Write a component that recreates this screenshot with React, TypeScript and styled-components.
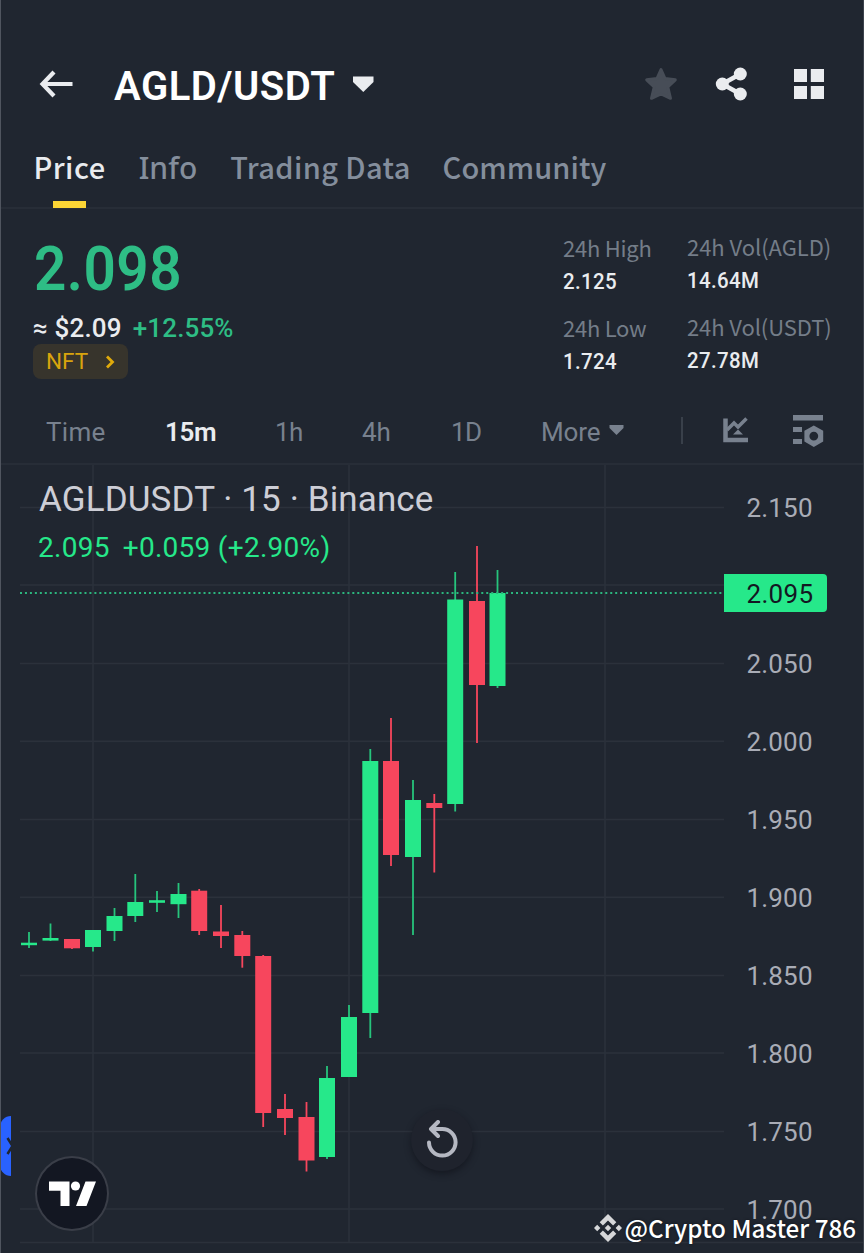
import React from 'react';
import styled, { createGlobalStyle } from 'styled-components';

const roboto = "Roboto, 'Liberation Sans', sans-serif";
const plex = "'Noto Sans CJK SC', 'Noto Sans', sans-serif";

const GlobalStyle = createGlobalStyle`
  * { box-sizing: border-box; }
  body { margin: 0; background: #202630; }
`;

const Screen = styled.main`
  position: relative;
  display: flex;
  flex-direction: column;
  width: 864px;
  height: 1253px;
  overflow: hidden;
  background: #202630;
  border-left: 1px solid #50555f;
  border-right: 1px solid #3c424c;
  font-family: ${roboto};
`;

const Header = styled.header`
  display: flex;
  align-items: center;
  height: 142px;
  padding: 26px 37px 0 37px;
`;

const PairTitle = styled.h1`
  display: flex;
  align-items: center;
  width: 261px;
  margin: 5px 0 0 40px;
  color: #fff;
  font: 600 40px/48px ${roboto};
  letter-spacing: 0.5px;
  white-space: nowrap;
`;

const HeaderActions = styled.div`
  display: flex;
  align-items: center;
  gap: 37px;
  margin-left: auto;
`;

const Icon = styled.svg`
  display: block;
  flex: none;
`;

const TitleCaret = styled(Icon)`
  margin: -5px 0 0 auto;
`;

const TabBar = styled.nav`
  display: flex;
  gap: 33px;
  height: 67px;
  padding-left: 33px;
  border-bottom: 2px solid #272d37;
`;

const Tab = styled.div<{ $active?: boolean; $width: number; $spacing: number; $serifed?: boolean }>`
  display: flex;
  flex-direction: column;
  align-items: center;
  justify-content: space-between;
  width: ${p => p.$width}px;
  color: ${p => (p.$active ? '#eaecef' : '#848e9c')};
  font: 500 ${p => (p.$serifed ? 30 : 29)}px/${p => (p.$serifed ? 51 : 49)}px ${p => (p.$serifed ? "'Noto Sans', sans-serif" : plex)};
  letter-spacing: ${p => p.$spacing}px;
  white-space: nowrap;
`;

const TabMarker = styled.span`
  width: 33px;
  height: 7px;
  margin-bottom: -1px;
  background: #fcd535;
`;

const Summary = styled.section`
  display: flex;
  justify-content: space-between;
  height: 192px;
  padding: 27px 32px 0 32px;
`;

const PriceBlock = styled.div`
  display: flex;
  flex-direction: column;
  align-items: flex-start;
`;

const LastPrice = styled.div`
  height: 66px;
  margin-left: 1px;
  color: #2ebd85;
  font: 600 61px/66px ${roboto};
  letter-spacing: 0.5px;
  transform: scaleX(0.93);
  transform-origin: left;
`;

const FiatRow = styled.div`
  display: flex;
  gap: 11px;
  margin-top: 11px;
  color: #eaecef;
  font: 500 26px/30px ${roboto};
  letter-spacing: 0.15px;
`;

const Change = styled.span`
  color: #2ebd85;
`;

const Badge = styled.div`
  display: flex;
  align-items: center;
  justify-content: space-between;
  width: 95px;
  height: 35px;
  margin-top: 1px;
  padding: 0 12px 0 13px;
  border-radius: 8px;
  background: #37342c;
  color: #d9a40d;
  font: 400 22.5px/35px ${roboto};
`;

const Stats = styled.dl`
  display: grid;
  grid-template-columns: 124px 144px;
  grid-template-rows: 80px 80px;
  margin: 0;
`;

const Stat = styled.div<{ $lift?: boolean }>`
  padding-top: ${p => (p.$lift ? 0 : 1)}px;
`;

const StatLabel = styled.dt<{ $spacing: number }>`
  margin-top: -3px;
  color: #747d88;
  font: 400 22px/26px ${plex};
  letter-spacing: ${p => p.$spacing}px;
  white-space: nowrap;
`;

const StatValue = styled.dd`
  margin: 7px 0 0;
  color: #eaecef;
  font: 500 22px/30px ${roboto};
  letter-spacing: 0.4px;
  transform: scaleX(0.93);
  transform-origin: left;
`;

const IntervalBar = styled.nav`
  display: flex;
  align-items: center;
  height: 64px;
  padding: 0 39px 0 45px;
  border-bottom: 2px solid #272d37;
`;

const Interval = styled.div<{ $active?: boolean; $width: number; $spacing?: number }>`
  display: flex;
  align-items: center;
  gap: 9px;
  width: ${p => p.$width}px;
  color: ${p => (p.$active ? '#eaecef' : '#78818e')};
  font: ${p => (p.$active ? 600 : 400)} 26px/32px ${roboto};
  letter-spacing: ${p => p.$spacing ?? 0}px;
  white-space: nowrap;
`;

const MoreCaret = styled(Icon)`
  margin-top: -5px;
`;

const Divider = styled.span`
  width: 2px;
  height: 27px;
  margin-top: -4px;
  background: #39404a;
`;

const IntervalTools = styled.div`
  display: flex;
  align-items: center;
  gap: 43px;
  margin: -3px 0 0 auto;
`;

const ChartArea = styled.section`
  position: relative;
  height: 788px;
`;

const ChartCanvas = styled.svg`
  display: block;
`;

const Legend = styled.div`
  position: absolute;
  top: 14px;
  left: 38px;
  color: #cdced6;
  font: 400 35px/42px ${roboto};
  letter-spacing: 0.12px;
  white-space: nowrap;
`;

const LegendValues = styled.div`
  display: flex;
  gap: 13px;
  margin: 11px 0 0 -1px;
  color: #26e88a;
  font: 400 28px/32px ${roboto};
  letter-spacing: 0.28px;
`;

const SideHandle = styled.div`
  position: absolute;
  top: 651px;
  left: -1px;
  width: 11px;
  height: 60px;
  overflow: hidden;
  border-radius: 11px 0 0 11px;
  background: #2962ff;
`;

const LogoButton = styled.div`
  position: absolute;
  top: 691px;
  left: 34px;
  display: grid;
  place-items: center;
  width: 74px;
  height: 75px;
  border: 2px solid #3a3e48;
  border-radius: 50%;
  background: #131722;
`;

const ResetButton = styled.div`
  position: absolute;
  top: 644px;
  left: 410px;
  display: grid;
  place-items: center;
  width: 62px;
  height: 62px;
  border-radius: 50%;
  background: #1f232d;
  box-shadow: 0 3px 6px rgba(12, 14, 22, 0.55);
`;

const Watermark = styled.div`
  position: absolute;
  right: 7px;
  bottom: 6px;
  display: flex;
  align-items: center;
  gap: 3px;
  color: #fff;
  font: 500 24.2px/38px ${plex};
  white-space: nowrap;
  text-shadow: 0 0 3px rgba(0, 0, 0, 0.5);
`;

const TOP = 465;
const GRID = [507.5, 585, 663.5, 741.3, 819.5, 897.3, 975.5, 1053, 1131.5, 1209, 1242.5];
const PRICES = ['2.150', '', '2.050', '2.000', '1.950', '1.900', '1.850', '1.800', '1.750', '1.700', ''];

// [centre x, body top, body bottom, wick top, wick bottom, rising]
const CANDLES: [number, number, number, number, number, boolean][] = [
  [29, 942.7, 945.2, 932, 948, true],
  [50.5, 938, 940.6, 923.5, 941, true],
  [72, 939, 948.3, 939, 949, false],
  [93, 930, 947, 930, 951.5, true],
  [114.5, 916, 931, 908, 941, true],
  [135.3, 902, 916, 874, 922, true],
  [157, 900.2, 902.8, 891, 912, true],
  [178.5, 894, 904.2, 883, 918, true],
  [199.2, 890.7, 931, 889, 935, false],
  [221, 931.5, 936, 905, 948, false],
  [242.3, 935, 956, 931, 967.7, false],
  [263.2, 956, 1113, 955, 1127, false],
  [285, 1109, 1118, 1094, 1135, false],
  [306.5, 1117, 1160.5, 1102, 1171.5, false],
  [327, 1078, 1157, 1066, 1159, true],
  [349, 1017, 1077, 1005, 1077, true],
  [370.3, 761, 1013, 749, 1038, true],
  [391, 761, 855, 718, 866, false],
  [413, 800, 857, 780, 935, true],
  [434.3, 803, 808, 794, 872.5, false],
  [455.2, 599.5, 804, 572, 811.5, true],
  [477, 601, 685, 546, 743, false],
  [497.5, 593, 686, 570, 688, true],
];

const Chart = () => (
  <ChartCanvas width="862" height="788" viewBox={`1 ${TOP} 862 788`}>
    {GRID.map(y => (
      <rect key={y} x="20" y={y - 0.8} width={y > 1240 ? 844 : 704} height="1.6" fill="#2b313b" />
    ))}
    {[93, 349, 605].map(x => (
      <rect key={x} x={x - 0.8} y={TOP} width="1.6" height="777" fill="#2b313b" />
    ))}
    {CANDLES.map(([x, top, bottom, high, low, up]) => (
      <g key={x}>
        <rect x={x - 0.9} y={high} width="1.8" height={low - high} fill={up ? '#26c47c' : '#f7465d'} />
        <rect x={x - 8} y={top} width="16" height={bottom - top} fill={up ? '#26e88a' : '#f7465d'} />
      </g>
    ))}
    <line x1="20" x2="724" y1="593" y2="593" stroke="#2cb67e" strokeWidth="2" strokeDasharray="2 2.960" />
    <path d="M724 574h99q4 0 4 4v30q0 4-4 4h-99z" fill="#26e88a" />
    <g fontFamily={roboto} fontSize="26" fill="#a9acb6">
      {PRICES.map((price, i) =>
        price ? (
          <text key={price} x="746.500" y={GRID[i] + 9.5} textLength="66">
            {price}
          </text>
        ) : null,
      )}
      <text x="746.500" y="602.5" textLength="66.500" fill="#131722">2.095</text>
    </g>
  </ChartCanvas>
);

const intervals = [
  { label: 'Time', width: 119, spacing: 0.3 },
  { label: '15m', width: 110, spacing: -0.3, active: true },
  { label: '1h', width: 87, spacing: -0.5 },
  { label: '4h', width: 89, spacing: 0 },
  { label: '1D', width: 90, spacing: -0.5 },
];

export default function App() {
  return (
    <Screen>
      <GlobalStyle />
      <Header>
        <Icon width="36" height="30" viewBox="0 0 36 30" fill="none" stroke="#eaecef" strokeWidth="4.2">
          <path d="M34.5 15H5M16 3 4.500 15 16 27" />
        </Icon>
        <PairTitle>
          <span>AGLD/USDT</span>
          <TitleCaret width="22" height="17" viewBox="0 0 22 17" fill="#eaecef">
            <path d="M0 .5h20.500v5.500L10.300 16 0 6z" />
          </TitleCaret>
        </PairTitle>
        <HeaderActions>
          <Icon width="34" height="34" viewBox="0 0 34 34" fill="#474d57" stroke="#474d57" strokeWidth="3" strokeLinejoin="round">
            <path d="m17 2.500 4 9 10.300 1.300-7.500 7.200 2.700 11.300L17 27 7.500 31.300 10.200 20 2.700 12.800 13 11.500z" />
          </Icon>
          <Icon width="34" height="34" viewBox="0 0 34 34" fill="#eaecef" stroke="#eaecef">
            <path d="M7.300 17l18-10M7.300 17l18 10" strokeWidth="4.500" />
            <circle cx="7.300" cy="17" r="6.500" stroke="none" />
            <circle cx="25.300" cy="7" r="6.500" stroke="none" />
            <circle cx="25.300" cy="27" r="6.500" stroke="none" />
          </Icon>
          <Icon width="40" height="34" viewBox="0 0 40 34" fill="#eaecef">
            <path d="M8 2h13v13H8zM24.800 2H38v13H24.800zM8 19h13v13H8zM24.800 19H38v13H24.800z" />
          </Icon>
        </HeaderActions>
      </Header>

      <TabBar>
        <Tab $active $width={71} $spacing={0.5}>
          Price
          <TabMarker />
        </Tab>
        <Tab $width={60} $spacing={0} $serifed>Info</Tab>
        <Tab $width={179} $spacing={0.4}>Trading Data</Tab>
        <Tab $width={163} $spacing={0.1}>Community</Tab>
      </TabBar>

      <Summary>
        <PriceBlock>
          <LastPrice>2.098</LastPrice>
          <FiatRow>
            <span>≈ $2.09</span>
            <Change>+12.55%</Change>
          </FiatRow>
          <Badge>
            NFT
            <Icon width="12" height="14" viewBox="0 0 12 14" fill="none" stroke="#e0aa0b" strokeWidth="2.800">
              <path d="m3 1.500 5.500 5.500L3 12.500" />
            </Icon>
          </Badge>
        </PriceBlock>
        <Stats>
          <Stat>
            <StatLabel $spacing={-0.25}>24h High</StatLabel>
            <StatValue>2.125</StatValue>
          </Stat>
          <Stat $lift>
            <StatLabel $spacing={-0.05}>24h Vol(AGLD)</StatLabel>
            <StatValue>14.64M</StatValue>
          </Stat>
          <Stat>
            <StatLabel $spacing={-0.25}>24h Low</StatLabel>
            <StatValue>1.724</StatValue>
          </Stat>
          <Stat $lift>
            <StatLabel $spacing={-0.1}>24h Vol(USDT)</StatLabel>
            <StatValue>27.78M</StatValue>
          </Stat>
        </Stats>
      </Summary>

      <IntervalBar>
        {intervals.map(item => (
          <Interval key={item.label} $width={item.width} $spacing={item.spacing} $active={item.active}>
            {item.label}
          </Interval>
        ))}
        <Interval $width={140} $spacing={-0.1}>
          More
          <MoreCaret width="15" height="12" viewBox="0 0 15 12" fill="#78818e">
            <path d="M.5 1h14v3L7.500 11 .5 4z" />
          </MoreCaret>
        </Interval>
        <Divider />
        <IntervalTools>
          <Icon width="26" height="27" viewBox="0 0 26 27" fill="none" stroke="#78818e">
            <path d="M2.500 1.500V23H25" strokeWidth="4.500" />
            <path d="M4 13l7-7 4 4 8.500-8.500" strokeWidth="3.500" />
            <path d="m10 17.500 5-5 5 5z" fill="#78818e" stroke="none" />
          </Icon>
          <Icon width="32" height="32" viewBox="0 0 32 32" fill="#78818e">
            <path d="M1 0h30v5.500H1zM1 12h9v5H1zM1 24h9v5H1z" />
            <path fillRule="evenodd" d="m21.800 10.500 9.400 5.300v10.700L21.800 32l-9.400-5.500V15.800zm0 6.200a4.400 4.400 0 1 0 0 8.800 4.400 4.400 0 0 0 0-8.800z" />
          </Icon>
        </IntervalTools>
      </IntervalBar>

      <ChartArea>
        <Chart />
        <Legend>
          AGLDUSDT · 15 · Binance
          <LegendValues>
            <span>2.095</span>
            <span>+0.059 (+2.90%)</span>
          </LegendValues>
        </Legend>
        <SideHandle>
          <Icon width="12" height="60" viewBox="0 0 12 60" fill="none" stroke="#202630" strokeWidth="2.500">
            <path d="m7.500 22 5 8-5 8" />
          </Icon>
        </SideHandle>
        <LogoButton>
          <Icon width="48" height="26" viewBox="0 0 48 26" fill="#fff">
            <path d="M1 .5h20.500V25h-9V9.800H1zM37.500.5H48L38.500 25H28z" />
            <circle cx="27.500" cy="5" r="4.600" />
          </Icon>
        </LogoButton>
        <ResetButton>
          <Icon width="34" height="40" viewBox="0 0 34 40" fill="none" stroke="#b5b8c2" strokeWidth="4" strokeLinecap="round" strokeLinejoin="round">
            <path d="M4 22.500A13.300 13.300 0 1 0 17.300 9H7M13 2 6 9l7 7" />
          </Icon>
        </ResetButton>
        <Watermark>
          <Icon width="28" height="28" viewBox="0 0 28 28" fill="#d6d7d9">
            <path d="m14 0 8.300 8.300-3.200 3.200L14 6.400l-5.100 5.100-3.200-3.200zM14 28l8.300-8.300-3.200-3.200-5.100 5.100-5.100-5.100-3.200 3.200zM3.200 10.800 6.400 14l-3.200 3.200L0 14zM24.800 10.800 28 14l-3.200 3.200L21.600 14zM14 10.800l3.200 3.200-3.200 3.200-3.200-3.200z" />
          </Icon>
          @Crypto Master 786
        </Watermark>
      </ChartArea>
    </Screen>
  );
}
